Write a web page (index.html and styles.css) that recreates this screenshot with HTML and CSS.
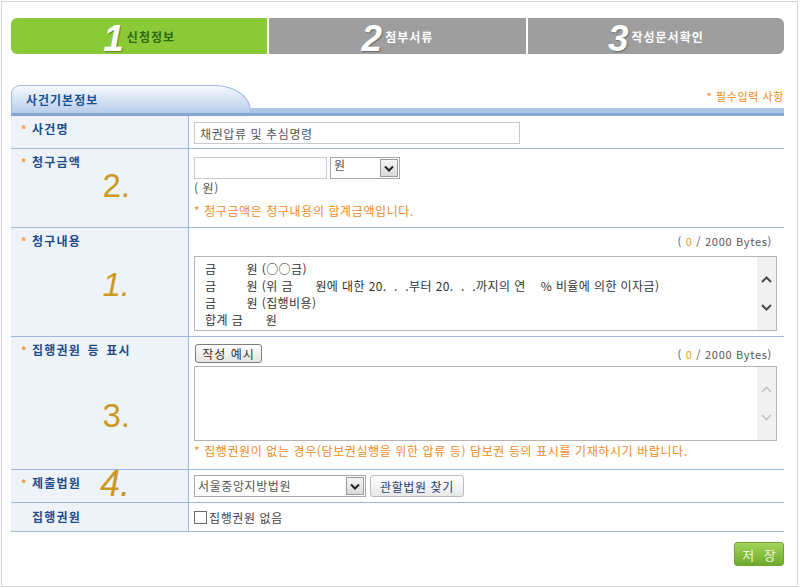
FILE: index.html
```html
<!DOCTYPE html>
<html lang="ko">
<head>
<meta charset="UTF-8">
<title>사건기본정보</title>
<link rel="stylesheet" href="styles.css">
</head>
<body>
<div class="page">

  <div class="steps">
    <div class="step on"><span class="num">1</span><span class="txt">신청정보</span></div>
    <div class="step"><span class="num">2</span><span class="txt">첨부서류</span></div>
    <div class="step"><span class="num">3</span><span class="txt">작성문서확인</span></div>
  </div>

  <div class="sec-head">
    <div class="tab">사건기본정보</div>
    <div class="sec-right">
      <div class="req">* 필수입력 사항</div>
      <div class="bar"></div>
    </div>
  </div>

  <div class="form-table">
    <div class="th"><span class="star">*</span>사건명</div>
    <div class="td">
      <input class="inp w-long" type="text" value="채권압류 및 추심명령">
    </div>

    <div class="th"><span class="star">*</span>청구금액<span class="mark m2">2.</span></div>
    <div class="td r2">
      <div class="line">
        <input class="inp w-short" type="text" value="">
        <div class="combo unit">
          <span class="val top">원</span>
          <span class="cbtn"><svg width="10" height="7" viewBox="0 0 10 7"><polyline points="1,1.5 5,5.5 9,1.5" fill="none" stroke="#222" stroke-width="2"/></svg></span>
        </div>
      </div>
      <div class="won">( 원)</div>
      <div class="note n2">* 청구금액은 청구내용의 합계금액입니다.</div>
    </div>

    <div class="th"><span class="star">*</span>청구내용<span class="mark m1">1.</span></div>
    <div class="td r3">
      <div class="bytes">( <span class="cnt">0</span> / 2000 Bytes)</div>
      <div class="ta ta3">
        <textarea>금        원 (○○금)
금        원 (위 금      원에 대한 20.  .  .부터 20.  .  .까지의 연    % 비율에 의한 이자금)
금        원 (집행비용)
합계 금      원</textarea>
        <div class="sb">
          <svg width="11" height="7" viewBox="0 0 11 7"><polyline points="1,6 5.5,1.5 10,6" fill="none" stroke="#4a4a4a" stroke-width="2"/></svg>
          <svg width="11" height="7" viewBox="0 0 11 7"><polyline points="1,1 5.5,5.5 10,1" fill="none" stroke="#4a4a4a" stroke-width="2"/></svg>
        </div>
      </div>
    </div>

    <div class="th"><span class="star">*</span>집행권원 등 표시<span class="mark m3">3.</span></div>
    <div class="td r4">
      <div class="line between">
        <button class="btn-ex" type="button">작성 예시</button>
        <div class="bytes">( <span class="cnt">0</span> / 2000 Bytes)</div>
      </div>
      <div class="ta ta4">
        <textarea></textarea>
        <div class="sb off">
          <svg width="11" height="7" viewBox="0 0 11 7"><polyline points="1,6 5.5,1.5 10,6" fill="none" stroke="#c4c4c4" stroke-width="1.6"/></svg>
          <svg width="11" height="7" viewBox="0 0 11 7"><polyline points="1,1 5.5,5.5 10,1" fill="none" stroke="#c4c4c4" stroke-width="1.6"/></svg>
        </div>
      </div>
      <div class="note n4">* 집행권원이 없는 경우(담보권실행을 위한 압류 등) 담보권 등의 표시를 기재하시기 바랍니다.</div>
    </div>

    <div class="th"><span class="star">*</span>제출법원<span class="mark m4">4.</span></div>
    <div class="td r5">
      <div class="line">
        <div class="combo court">
          <span class="val">서울중앙지방법원</span>
          <span class="cbtn"><svg width="10" height="7" viewBox="0 0 10 7"><polyline points="1,1.5 5,5.5 9,1.5" fill="none" stroke="#222" stroke-width="2"/></svg></span>
        </div>
        <button class="btn" type="button">관할법원 찾기</button>
      </div>
    </div>

    <div class="th mid"><span class="star"></span>집행권원</div>
    <div class="td r6">
      <label class="chk"><input type="checkbox">집행권원 없음</label>
    </div>
  </div>

  <div class="foot">
    <button class="save" type="button">저 장</button>
  </div>

</div>
</body>
</html>
```

FILE: styles.css
```css
body {
  margin: 0;
  background: #fff;
  font-family: "Noto Sans CJK KR", "Noto Sans", sans-serif;
  font-size: 12px;
  letter-spacing: 0.6px;
  color: #555;
}

.page {
  box-sizing: border-box;
  width: 797px;
  height: 586px;
  margin: 1px 0 0 1px;
  border: 1px solid #d5d5d5;
  padding: 16px 13px 0 9px;
}

/* step bar */
.steps {
  display: flex;
  gap: 2px;
  height: 36px;
  letter-spacing: 0;
}
.step {
  flex: 1;
  display: flex;
  align-items: center;
  justify-content: center;
  background: #9e9e9e;
  color: #fff;
}
.step:first-child { border-radius: 6px 0 0 6px; }
.step:last-child { border-radius: 0 6px 6px 0; }
.step.on {
  background: #8cc936;
  color: #2a6b14;
}
.num {
  font-family: "Liberation Sans", Arial, sans-serif;
  font-style: italic;
  font-weight: bold;
  font-size: 37px;
  line-height: 30px;
  color: #fff;
  margin-top: 6px;
  margin-right: 3px;
  text-shadow: 1px 1px 1px rgba(0,0,0,0.35);
}
.txt {
  font-weight: bold;
  font-size: 12px;
  letter-spacing: 1px;
}

/* section head */
.sec-head {
  display: flex;
  margin-top: 31px;
  height: 28px;
  border-bottom: 3px solid #85a5d2;
}
.tab {
  box-sizing: border-box;
  width: 240px;
  padding-left: 14px;
  background: linear-gradient(#f5f9fe, #b7cdea);
  border: 1px solid #9fb9dc;
  border-bottom: 0;
  border-radius: 9px 36px 0 0 / 9px 26px 0 0;
  font-weight: bold;
  color: #1c4f8f;
  line-height: 28px;
  letter-spacing: 1px;
}
.sec-right {
  flex: 1;
  display: flex;
  flex-direction: column;
  justify-content: flex-end;
}
.req {
  text-align: right;
  color: #f08a1c;
  font-size: 11px;
  line-height: 14px;
  margin-bottom: 5px;
}
.bar {
  height: 5px;
  background: #adc5e6;
}

/* form table */
.form-table {
  display: grid;
  grid-template-columns: 178px 1fr;
}
.th {
  position: relative;
  box-sizing: border-box;
  background: #eef3fa;
  border-right: 1px solid #9db8de;
  border-bottom: 1px solid #9db8de;
  padding: 5px 0 0 10px;
  font-weight: bold;
  color: #1d4d8b;
  line-height: 16px;
  letter-spacing: 1.2px;
  word-spacing: 2px;
}
.th.mid { padding-top: 6px; }
.star {
  display: inline-block;
  width: 11px;
  color: #f39a1e;
  font-size: 11px;
}
.mark {
  position: absolute;
  right: 58px;
  font-family: "Liberation Sans", Arial, sans-serif;
  font-weight: normal;
  font-size: 33px;
  line-height: 33px;
  letter-spacing: 0;
  color: #c99a1f;
}
.m2 { top: 20px; }
.m1 { top: 40px; font-style: italic; }
.m3 { top: 62px; }
.m4 { top: -3px; font-style: italic; font-size: 36px; }

.td {
  border-bottom: 1px solid #9db8de;
  padding: 6px 7px 4px 5px;
}
.td.r2 { padding: 8px 7px 8px 5px; }
.td.r3 { padding: 5px 7px 5px 5px; }
.td.r4 { padding: 7px 7px 10px 5px; }
.td.r5 { padding: 5px 7px 5px 5px; }
.td.r6 { padding: 5px 7px 5px 5px; }

.line {
  display: flex;
  align-items: center;
}
.line.between { justify-content: space-between; }

.inp {
  display: block;
  box-sizing: border-box;
  height: 22px;
  border: 1px solid #c9c9c9;
  padding: 0 5px;
  font-family: "Noto Sans CJK KR", sans-serif;
  font-size: 12px;
  letter-spacing: 0.6px;
  color: #555;
  outline: none;
}
.w-long { width: 326px; }
.w-short { width: 133px; }

.combo {
  box-sizing: border-box;
  display: flex;
  height: 22px;
  border: 1px solid #a9a9a9;
  background: #fff;
}
.combo.unit { width: 70px; margin-left: 3px; }
.combo.court { width: 172px; }
.combo .val {
  flex: 1;
  padding: 0 3px;
  line-height: 20px;
  color: #555;
}
.combo .val.top { line-height: 11px; padding-top: 1px; }
.cbtn {
  box-sizing: border-box;
  width: 18px;
  margin: 1px;
  border: 1px solid #9a9a9a;
  background: linear-gradient(#f6f6f6, #d9d9d9);
  display: flex;
  align-items: center;
  justify-content: center;
}

.won {
  margin-top: 1px;
  line-height: 16px;
}
.note {
  color: #f08a1c;
  line-height: 16px;
}
.n2 { margin-top: 7px; }
.n4 { margin-top: 2px; }

.bytes {
  text-align: right;
  font-size: 11px;
  line-height: 16px;
  padding-right: 5px;
  letter-spacing: 0.7px;
}
.cnt { color: #f39a1e; }

.ta {
  box-sizing: border-box;
  display: flex;
  height: 75px;
  border: 1px solid #b4b4b4;
}
.ta3 { margin-top: 7px; }
.ta4 { margin-top: 3px; }
.ta textarea {
  flex: 1;
  border: 0;
  resize: none;
  overflow: hidden;
  outline: none;
  padding: 3px 10px;
  font-family: "Noto Sans CJK KR", sans-serif;
  font-size: 12px;
  line-height: 17px;
  letter-spacing: 0.4px;
  color: #333;
}
.sb {
  width: 19px;
  background: #f1f1f1;
  display: flex;
  flex-direction: column;
  justify-content: space-between;
  align-items: center;
  padding: 19px 0;
}

.btn-ex {
  box-sizing: border-box;
  width: 67px;
  height: 19px;
  margin-left: 1px;
  padding: 0;
  border: 1px solid #7d7d7d;
  border-radius: 3px;
  background: linear-gradient(#fff, #e4e4e4);
  font-family: "Noto Sans CJK KR", sans-serif;
  font-size: 12px;
  line-height: 16px;
  letter-spacing: 1px;
  color: #333;
}
.btn {
  box-sizing: border-box;
  width: 94px;
  height: 22px;
  margin-left: 4px;
  padding: 0;
  border: 1px solid #bcbcbc;
  border-radius: 3px;
  background: linear-gradient(#fff, #e8e8e8);
  font-family: "Noto Sans CJK KR", sans-serif;
  font-size: 12px;
  letter-spacing: 0.6px;
  color: #1e3d6c;
}

.chk {
  display: flex;
  align-items: center;
  height: 18px;
  color: #444;
}
.chk input {
  appearance: none;
  -webkit-appearance: none;
  width: 13px;
  height: 13px;
  margin: 0 2px 0 0;
  border: 1px solid #6b6b6b;
  background: #fff;
}

.foot {
  display: flex;
  justify-content: flex-end;
  margin-top: 10px;
}
.save {
  box-sizing: border-box;
  width: 50px;
  height: 24px;
  padding: 0 0 0 3px;
  border: 1px solid #6fa534;
  border-radius: 3px;
  background: linear-gradient(#a2d45a, #6dab2b);
  font-family: "Noto Sans CJK KR", sans-serif;
  font-size: 13px;
  letter-spacing: 3px;
  color: #eef8e0;
}
```
